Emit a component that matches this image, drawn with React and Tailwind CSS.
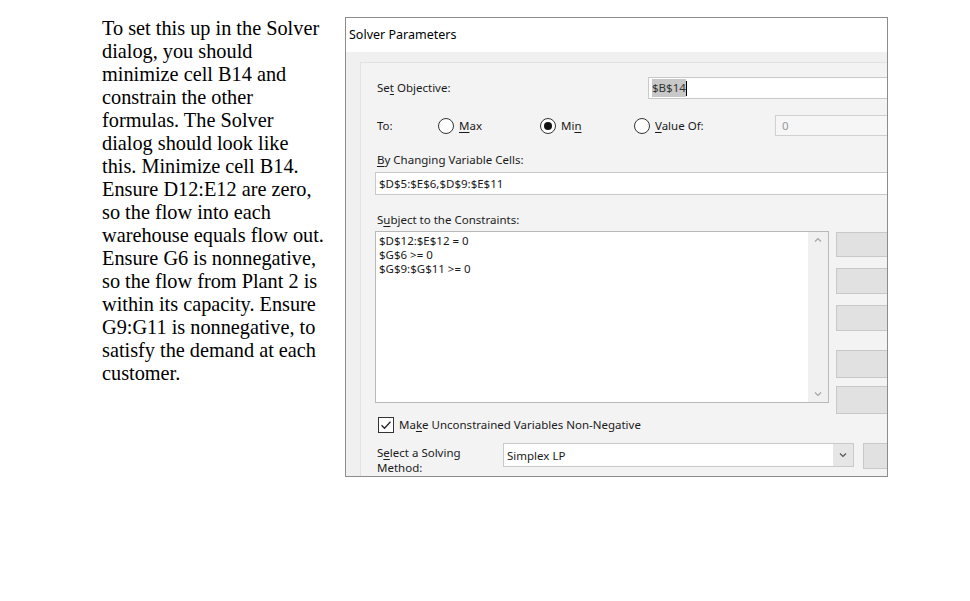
import React from 'react';

const ui = { fontFamily: '"Noto Sans", "Open Sans", sans-serif' };

const Radio = ({ checked, children, className = '' }) => (
  <div className={`flex items-center ${className}`}>
    <span className="flex h-[16px] w-[16px] items-center justify-center rounded-full border border-[#333] bg-white">
      {checked && <span className="h-[8px] w-[8px] rounded-full bg-[#111]" />}
    </span>
    <span className="ml-[5px]">{children}</span>
  </div>
);

const SideButton = ({ className = '' }) => (
  <div className={`w-[60px] shrink-0 border border-[#c8c8c8] bg-[#e1e1e1] ${className}`} />
);

const U = ({ children }) => <span className="underline underline-offset-2">{children}</span>;

const App = () => {
  return (
    <div className="flex min-h-[601px] w-[970px] bg-white">
      {/* explanation text */}
      <div className="w-[345px] shrink-0 pl-[102px] pt-[17px]">
        <p
          className="w-[222px] text-[20.3px] leading-[23px] text-black"
          style={{ fontFamily: '"Liberation Serif", "Times New Roman", serif' }}
        >
          To set this up in the Solver dialog, you should minimize cell B14 and constrain the other formulas. The Solver
          dialog should look like this. Minimize cell B14. Ensure D12:E12 are zero, so the flow into each warehouse
          equals flow out. Ensure G6 is nonnegative, so the flow from Plant 2 is within its capacity. Ensure G9:G11 is
          nonnegative, to satisfy the demand at each customer.
        </p>
      </div>

      {/* solver dialog screenshot */}
      <div className="mt-[17px] h-[460px] w-[543px] shrink-0 overflow-hidden border border-[#8c8c8c] bg-[#f0f0f0] text-[11.5px] text-[#1a1a1a]" style={ui}>
        <div className="flex h-[34px] items-center bg-white pl-[3px] text-[12.5px] text-black">Solver Parameters</div>
        <div className="ml-[14px] mt-[10px] h-[500px] w-[600px] border border-[#e2e2e2] bg-[#f3f3f3] pl-[14px] pt-[14px]">
          {/* objective */}
          <div className="flex h-[22px] items-center">
            <div className="w-[273px] pl-[2px]">
              Se<U>t</U> Objective:
            </div>
            <div className="flex h-[22px] w-[300px] items-center border border-[#c9c9c9] bg-white pl-[3px]">
              <span className="bg-[#c8c8c8] text-[#333]">$B$14</span>
              <span className="h-[15px] w-[1px] bg-black" />
            </div>
          </div>

          {/* to */}
          <div className="mt-[16px] flex h-[21px] items-center">
            <div className="w-[63px] pl-[2px]">To:</div>
            <Radio className="w-[102px]">
              <U>M</U>ax
            </Radio>
            <Radio checked className="w-[94px]">
              Mi<U>n</U>
            </Radio>
            <Radio className="w-[141px]">
              <U>V</U>alue Of:
            </Radio>
            <div className="flex h-[21px] w-[150px] items-center border border-[#d0d0d0] bg-[#f6f6f6] pl-[6px] text-[#999]">0</div>
          </div>

          {/* changing cells */}
          <div className="mt-[16px] pl-[2px] leading-[16px]">
            <U>B</U>y Changing Variable Cells:
          </div>
          <div className="mt-[4px] flex h-[23px] w-[560px] items-center border border-[#c9c9c9] bg-white pl-[3px]">
            $D$5:$E$6,$D$9:$E$11
          </div>

          {/* constraints */}
          <div className="mt-[17px] pl-[2px] leading-[16px]">
            S<U>u</U>bject to the Constraints:
          </div>
          <div className="mt-[3px] flex h-[172px] items-start">
            <div className="flex h-[172px] w-[454px] border border-[#b9b9b9] bg-white">
              <div className="flex-1 pl-[3px] pt-[2px] leading-[14px]">
                <div>$D$12:$E$12 = 0</div>
                <div>$G$6 &gt;= 0</div>
                <div>$G$9:$G$11 &gt;= 0</div>
              </div>
              <div className="flex w-[20px] flex-col items-center justify-between bg-[#f0f0f0] py-[3px] text-[#a6a6a6]">
                <svg width="10" height="10" viewBox="0 0 10 10" fill="none" stroke="currentColor" strokeWidth="1.2">
                  <path d="M2 6.5 5 3.5 8 6.5" />
                </svg>
                <svg width="10" height="10" viewBox="0 0 10 10" fill="none" stroke="currentColor" strokeWidth="1.2">
                  <path d="M2 3.5 5 6.5 8 3.5" />
                </svg>
              </div>
            </div>
            <div className="ml-[7px] flex flex-col">
              <SideButton className="mt-[1px] h-[25px]" />
              <SideButton className="mt-[11px] h-[26px]" />
              <SideButton className="mt-[11px] h-[26px]" />
              <SideButton className="mt-[19px] h-[28px]" />
              <SideButton className="mt-[8px] h-[28px]" />
            </div>
          </div>

          {/* non-negative */}
          <div className="mt-[13px] flex items-center pl-[3px]">
            <span className="flex h-[16px] w-[16px] items-center justify-center border border-[#333] bg-white">
              <svg width="12" height="12" viewBox="0 0 12 12" fill="none" stroke="#222" strokeWidth="1.3">
                <path d="M1.5 6.2 4.5 9.2 10.5 2.8" />
              </svg>
            </span>
            <span className="ml-[5px]">
              Ma<U>k</U>e Unconstrained Variables Non-Negative
            </span>
          </div>

          {/* solving method */}
          <div className="mt-[10px] flex">
            <div className="w-[128px] pl-[2px] pt-[2px] leading-[15px]">
              S<U>e</U>lect a Solving
              <br />
              Method:
            </div>
            <div className="flex h-[24px] w-[351px] items-center border border-[#c9c9c9] bg-white pl-[3px]">
              <span className="flex-1">Simplex LP</span>
              <span className="flex h-[22px] w-[20px] items-center justify-center bg-[#e6e6e6] text-[#555]">
                <svg width="10" height="10" viewBox="0 0 10 10" fill="none" stroke="currentColor" strokeWidth="1.2">
                  <path d="M2 3.5 5 6.5 8 3.5" />
                </svg>
              </span>
            </div>
            <SideButton className="ml-[9px] h-[26px]" />
          </div>
        </div>
      </div>
    </div>
  );
};

export default App;
